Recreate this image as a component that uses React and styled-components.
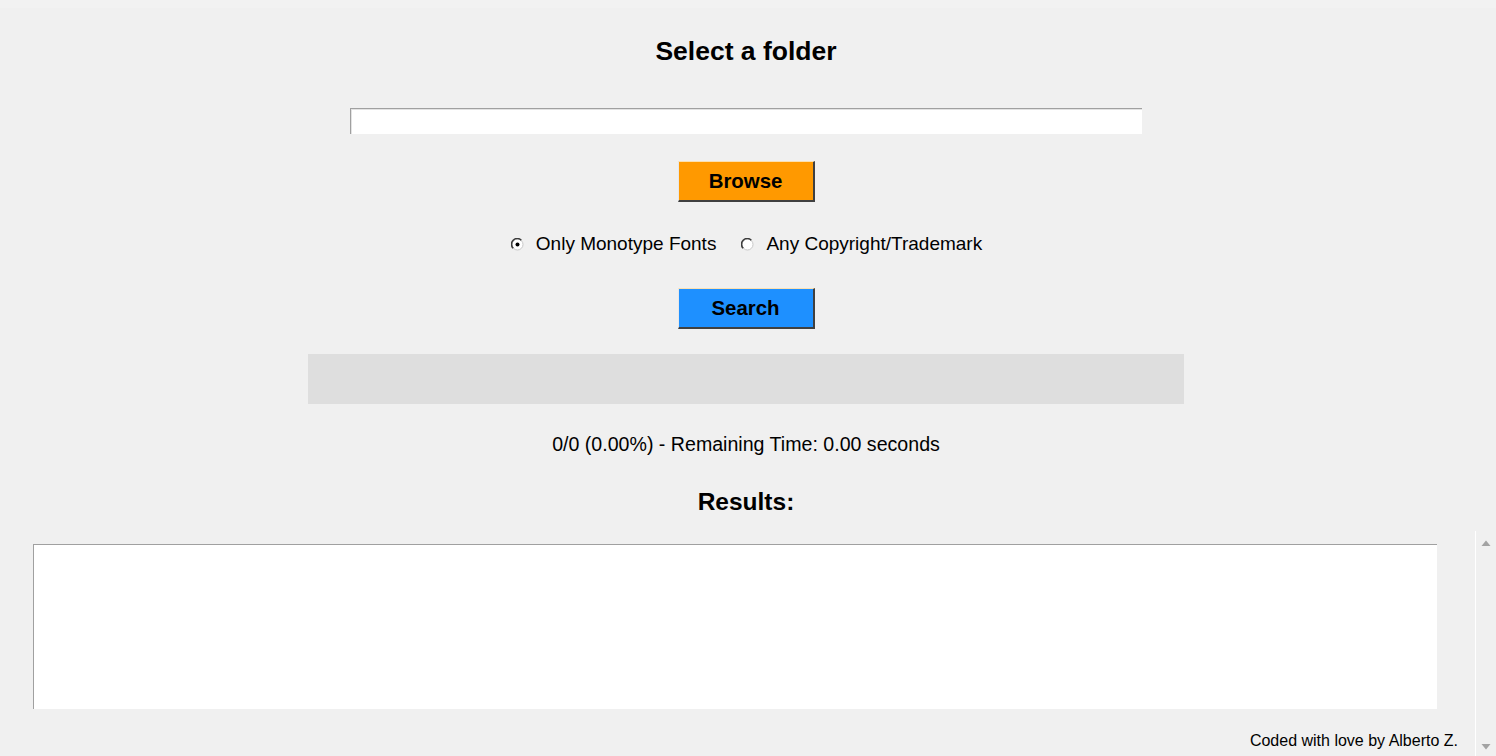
import React from "react";
import styled, { createGlobalStyle } from "styled-components";

const GlobalStyle = createGlobalStyle`
  html, body {
    margin: 0;
    padding: 0;
    background: #f0f0f0;
    font-family: "Liberation Sans", Arial, sans-serif;
    color: #000;
  }
  #root {
    height: 756px;
    overflow: hidden;
  }
`;

const Radio = ({ checked }) => (
  <svg width="13" height="13" viewBox="0 0 13 13">
    <circle cx="6.5" cy="6.5" r="5.5" fill="#fff" stroke="#c8c8c8" strokeWidth="1" />
    <path d="M2.2 10.3 A5.5 5.5 0 0 1 10.3 2.2" fill="none" stroke="#3c3c3c" strokeWidth="1.6" />
    {checked && <circle cx="6.5" cy="6.5" r="2" fill="#000" />}
  </svg>
);

const ArrowIcon = ({ down }) => (
  <svg width="10" height="7" viewBox="0 0 10 7">
    <path d={down ? "M0.5 1 L9.5 1 L5 6.5 Z" : "M0.5 6 L9.5 6 L5 0.5 Z"} fill="#a3a3a3" />
  </svg>
);

const App = () => {
  return (
    <>
      <GlobalStyle />
      <Window>
        <TopStrip />
        <Main>
          <Title>Select a folder</Title>
          <PathInput />
          <ActionButton $bg="#ff9900" $mt={27}>Browse</ActionButton>
          <RadioRow>
            <RadioOption>
              <Radio checked />
              <span>Only Monotype Fonts</span>
            </RadioOption>
            <RadioOption>
              <Radio />
              <span>Any Copyright/Trademark</span>
            </RadioOption>
          </RadioRow>
          <ActionButton $bg="#1e90ff" $mt={33}>Search</ActionButton>
          <ProgressBar />
          <Status>0/0 (0.00%) - Remaining Time: 0.00 seconds</Status>
          <ResultsTitle>Results:</ResultsTitle>
        </Main>
        <Bottom>
          <ResultsColumn>
            <ResultsBox />
            <Footer>Coded with love by Alberto Z.</Footer>
          </ResultsColumn>
          <ScrollBar>
            <ArrowIcon />
            <ArrowIcon down />
          </ScrollBar>
        </Bottom>
      </Window>
    </>
  );
};

export default App;

const Window = styled.div`
  width: 1496px;
  height: 756px;
  display: flex;
  flex-direction: column;
  background: #f0f0f0;
`;

const TopStrip = styled.div`
  height: 8px;
  background: #f2f2f2;
`;

const Main = styled.div`
  display: flex;
  flex-direction: column;
  align-items: center;
  padding-right: 4px;
`;

const Title = styled.h1`
  margin: 28px 0 0;
  font-size: 26.5px;
  line-height: 30px;
  font-weight: bold;
`;

const PathInput = styled.div`
  margin-top: 42px;
  width: 791px;
  height: 25px;
  background: #fff;
  border-top: 1px solid #a0a0a0;
  border-left: 1px solid #a0a0a0;
  box-shadow: inset 1px 1px 0 #e3e3e3;
`;

const ActionButton = styled.button`
  margin-top: ${(p) => p.$mt}px;
  width: 137px;
  height: 41px;
  box-sizing: border-box;
  background: ${(p) => p.$bg};
  border: none;
  border-top: 1px solid #fbe0b0;
  border-left: 1px solid #e8e8e8;
  border-right: 2px solid #404040;
  border-bottom: 2px solid #404040;
  font-family: "Liberation Sans", Arial, sans-serif;
  font-size: 20.4px;
  font-weight: bold;
  color: #000;
  padding: 0;
`;

const RadioRow = styled.div`
  margin-top: 31px;
  display: flex;
  gap: 25px;
  margin-left: 1px;
  height: 22px;
  align-items: center;
`;

const RadioOption = styled.label`
  display: flex;
  align-items: center;
  gap: 12px;
  font-size: 19px;
  line-height: 22px;
`;

const ProgressBar = styled.div`
  margin-top: 25px;
  width: 876px;
  height: 50px;
  background: #dedede;
`;

const Status = styled.div`
  margin-top: 29px;
  font-size: 19.6px;
  line-height: 22px;
`;

const ResultsTitle = styled.h2`
  margin: 32px 0 0;
  font-size: 24.5px;
  line-height: 30px;
  font-weight: bold;
`;

const Bottom = styled.div`
  margin-top: 14px;
  flex: 1;
  display: flex;
`;

const ResultsColumn = styled.div`
  flex: 1;
  display: flex;
  flex-direction: column;
`;

const ResultsBox = styled.div`
  margin: 13px 0 0 33px;
  width: 1403px;
  height: 164px;
  background: #fff;
  border-top: 1px solid #a0a0a0;
  border-left: 1px solid #a0a0a0;
`;

const Footer = styled.div`
  margin-top: 23px;
  align-self: flex-end;
  padding-right: 17px;
  font-size: 16px;
  line-height: 18px;
`;

const ScrollBar = styled.div`
  width: 20px;
  border-left: 1px solid #ffffff;
  display: flex;
  flex-direction: column;
  justify-content: space-between;
  align-items: center;
  padding: 9px 0 6px;
`;
